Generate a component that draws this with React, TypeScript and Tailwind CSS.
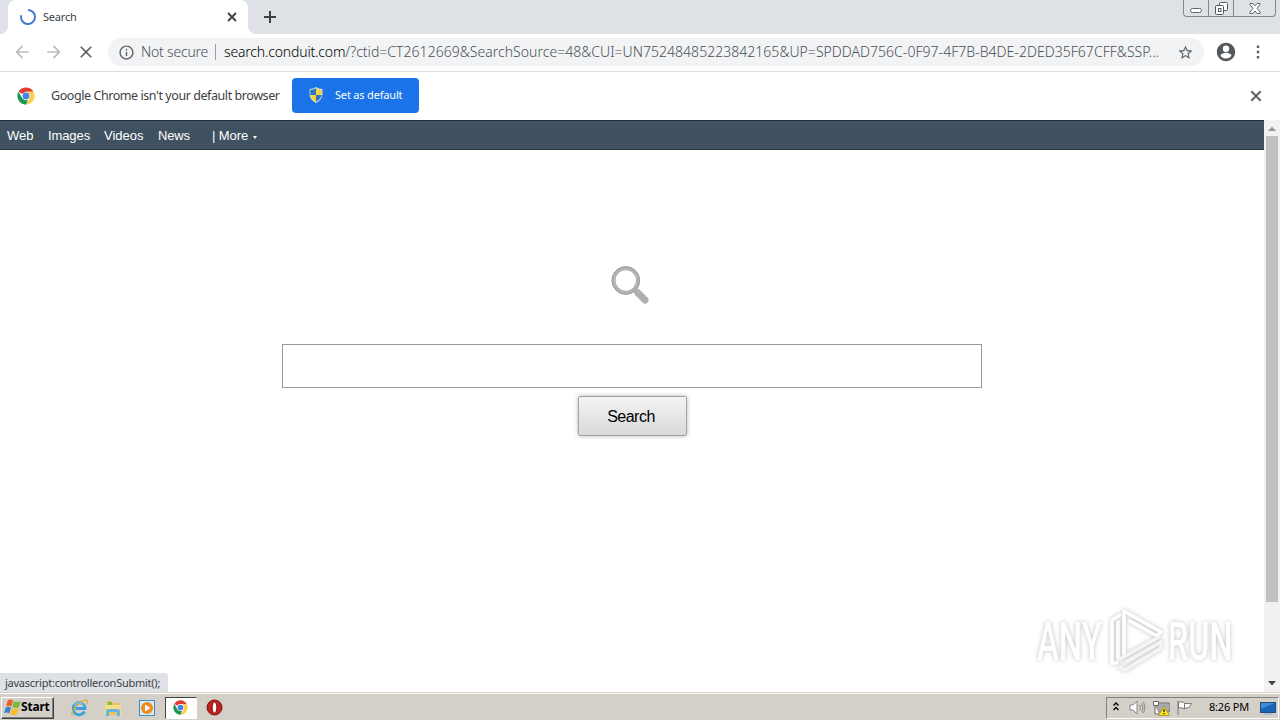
import type { ReactNode } from "react";

const Glyph = ({ size = 16, className = "", children }: { size?: number; className?: string; children: ReactNode }) => (
  <svg width={size} height={size} viewBox="0 0 24 24" fill="currentColor" className={`shrink-0 ${className}`}>
    {children}
  </svg>
);

const ChromeLogo = ({ size }: { size: number }) => (
  <svg width={size} height={size} viewBox="0 0 48 48" className="shrink-0">
    <circle cx="24" cy="24" r="23" fill="#fff" />
    <path d="M24 24 4.1 12.5A23 23 0 0 1 43.9 12.5H24Z" fill="#e33b2e" />
    <path d="M24 12.5h19.9A23 23 0 0 1 24 47l10-17Z" fill="#fcd04b" />
    <path d="M4.1 12.5 14 29.8l10 5.7 5-1L24 47A23 23 0 0 1 4.1 12.5Z" fill="#1a9850" />
    <circle cx="24" cy="24" r="11" fill="#fff" />
    <circle cx="24" cy="24" r="9.2" fill="#4a83e6" />
  </svg>
);

const TabStrip = () => {
  return (
    <div className="flex h-[34px] bg-[#dee1e6]">
      <div className="w-2 bg-white">
        <div className="h-full w-2 rounded-br-lg bg-[#dee1e6]" />
      </div>
      <div className="flex w-[240px] items-center rounded-t-lg bg-white pl-3 pr-2.5">
        <svg width="16" height="16" viewBox="0 0 16 16" className="shrink-0" fill="none" stroke="#4478d0" strokeWidth="2">
          <path d="M8 1A7 7 0 1 1 1.2 6.3" />
        </svg>
        <span className="ml-[7px] flex-1 text-[11px] tracking-[-0.2px] text-[#3c4043]">Search</span>
        <svg width="12" height="12" viewBox="0 0 12 12" stroke="#3c4043" strokeWidth="1.8">
          <path d="m2 2 8 8M10 2l-8 8" />
        </svg>
      </div>
      <div className="w-2 bg-white">
        <div className="h-full w-2 rounded-bl-lg bg-[#dee1e6]" />
      </div>
      <svg width="12" height="12" viewBox="0 0 12 12" className="ml-2 mt-[11px]" stroke="#3c4043" strokeWidth="2">
        <path d="M6 0v12M0 6h12" />
      </svg>
      <div className="ml-auto mr-1 flex h-[17px] w-[93px] rounded-b border border-t-0 border-[#85878d]">
        <div className="flex w-[25px] items-center justify-center border-r border-[#85878d]">
          <div className="mt-1 h-[5px] w-3 rounded-sm border border-[#62656b] bg-white" />
        </div>
        <div className="flex w-[25px] items-center justify-center border-r border-[#85878d]">
          <svg width="13" height="13" viewBox="0 0 13 13" fill="#fff" stroke="#56595f">
            <rect x="4.5" y=".5" width="8" height="8" rx="1" />
            <rect x=".5" y="3.5" width="8" height="9" rx="1" />
            <rect x="3.5" y="6.5" width="2.5" height="3" />
          </svg>
        </div>
        <div className="flex flex-1 items-center justify-center">
          <svg width="12" height="11" viewBox="0 0 12 11" fill="#fff" stroke="#62656b">
            <path d="M1 .5h3l2 2.3L8 .5h3v1L8 5.5l3 3.5v1.5H8L6 8l-2 2.5H1V9l3-3.5-3-4Z" />
          </svg>
        </div>
      </div>
    </div>
  );
};

const AddressBar = () => {
  return (
    <div className="flex h-[38px] items-start border-b border-[#dcdee1] bg-white pt-1">
      <Glyph size={20} className="ml-3 mt-1 text-[#bbbdc0]">
        <path d="M20 11H7.8l5.6-5.6L12 4l-8 8 8 8 1.4-1.4L7.8 13H20z" />
      </Glyph>
      <Glyph size={20} className="ml-3 mt-1 text-[#bbbdc0]">
        <path d="m12 4-1.4 1.4 5.6 5.6H4v2h12.2l-5.6 5.6L12 20l8-8z" />
      </Glyph>
      <Glyph size={20} className="ml-3 mt-1 text-[#5f6368]">
        <path d="M19 6.4 17.6 5 12 10.6 6.4 5 5 6.4l5.6 5.6L5 17.6 6.4 19l5.6-5.6 5.6 5.6 1.4-1.4-5.6-5.6z" />
      </Glyph>
      <div className="ml-3 flex h-7 w-[1096px] items-center rounded-full bg-[#f1f3f4] pl-[10px] pr-[10px] text-[14px] font-light text-[#4c5055]">
        <Glyph size={17} className="text-[#5f6368]">
          <path d="M11 7h2v2h-2zm0 4h2v6h-2zm1-9C6.500 2 2 6.500 2 12s4.500 10 10 10 10-4.500 10-10S17.500 2 12 2m0 18c-4.400 0-8-3.600-8-8s3.600-8 8-8 8 3.600 8 8-3.600 8-8 8" />
        </Glyph>
        <span className="-mt-px ml-1.5 w-[67px] whitespace-nowrap tracking-[-0.2px]">Not secure</span>
        <div className="ml-[7px] h-4 w-px bg-[#9a9da1]" />
        <span className="-mt-px ml-2 flex-1 whitespace-nowrap">
          <span className="tracking-[-0.17px] text-black">search.conduit.com</span>
          <span className="tracking-[0.03px]">
            /?ctid=CT2612669&SearchSource=48&CUI=UN75248485223842165&UP=SPDDAD756C-0F97-4F7B-B4DE-2DED35F67CFF&SSP...
          </span>
        </span>
        <Glyph size={17} className="text-[#5f6368]">
          <path d="m22 9.200-7.200-.600L12 2 9.200 8.600 2 9.200l5.500 4.800L5.800 21l6.200-3.700 6.200 3.700-1.600-7zm-10 6.200-3.800 2.300 1-4.300-3.300-2.900 4.400-.400L12 6.100l1.700 4 4.400.400-3.300 2.900 1 4.300z" />
        </Glyph>
      </div>
      <Glyph size={22} className="ml-[11px] mt-[3px] text-[#54575c]">
        <path d="M12 2C6.500 2 2 6.500 2 12s4.500 10 10 10 10-4.500 10-10S17.500 2 12 2m0 3a3.500 3.500 0 1 1 0 7 3.500 3.500 0 0 1 0-7m0 14.200c-2.500 0-4.700-1.300-6-3.200 0-2 4-3.100 6-3.100s6 1.100 6 3.100a7.200 7.200 0 0 1-6 3.200" />
      </Glyph>
      <Glyph size={20} className="ml-[11px] mt-1 text-[#5f6368]">
        <path d="M10.500 4.200h3v3h-3zm0 6.300h3v3h-3zm0 6.300h3v3h-3z" />
      </Glyph>
    </div>
  );
};

const DefaultBrowserBar = () => {
  return (
    <div className="flex h-12 items-center bg-white pb-px pl-[17px]">
      <ChromeLogo size={18} />
      <span className="ml-4 mt-px w-[229px] whitespace-nowrap text-[12.500px] tracking-[-0.43px] text-[#3c4043]">
        Google Chrome isn't your default browser
      </span>
      <button className="ml-3 flex h-[35px] w-[127px] items-center rounded bg-[#1a73e8] pl-4 text-[11px] text-white">
        <svg width="16" height="16" viewBox="0 0 16 16" className="-mt-0.5">
          <path d="M8 0q3 2 6.500 2v4.500C14.500 11 12 14 8 16 4 14 1.500 11 1.500 6.500V2Q5 2 8 0Z" fill="#c9dceb" />
          <path d="M8 1.300V8H2.300V3Q5 3 8 1.300ZM8 8h5.700c-.5 3-3 5.500-5.700 6.800Z" fill="#2f75c4" />
          <path d="M8 1.300Q11 3 13.700 3v5H8ZM2.300 8H8v6.800C4.500 13.500 2.500 11 2.300 8Z" fill="#f5d53b" />
        </svg>
        <span className="ml-[11px] whitespace-nowrap tracking-[-0.18px]">Set as default</span>
      </button>
      <svg width="12" height="12" viewBox="0 0 12 12" className="ml-auto mr-[18px] mt-px" stroke="#5f6368" strokeWidth="2">
        <path d="m1.300 1.300 9.400 9.400m0-9.400-9.400 9.400" />
      </svg>
    </div>
  );
};

const SearchPage = () => {
  return (
    <main className="flex-1 bg-white font-['Liberation_Sans',sans-serif]">
      <nav className="flex h-[30px] items-center border-y border-t-[#22303b] border-b-[#26323c] bg-[#405161] pl-[7px] pt-0.5 text-[13px] text-white">
        <span className="w-[41px]">Web</span>
        <span className="w-[56px] tracking-[-0.1px]">Images</span>
        <span className="w-[54px]">Videos</span>
        <span className="w-[54px] tracking-[-0.2px]">News</span>
        <span className="whitespace-nowrap tracking-[-0.1px]">| More</span>
        <svg width="4" height="3" viewBox="0 0 4 3" className="ml-[5px] mt-[3px]">
          <path d="M0 0h4L2 3Z" fill="#fff" />
        </svg>
      </nav>
      <div className="flex flex-col items-center pt-[115px]">
        <svg width="40" height="40" viewBox="0 0 40 40" className="mr-1" fill="none">
          <circle cx="15.800" cy="15.500" r="12.200" stroke="#b4b4b4" strokeWidth="4" />
          <circle cx="15.800" cy="15.500" r="13.700" stroke="#9c9c9c" />
          <path d="m24 24 3 3" stroke="#aaa" strokeWidth="3" />
          <path d="m27.500 27.500 7.500 7.500" stroke="#b0b0b0" strokeWidth="7" strokeLinecap="round" />
        </svg>
        <input className="mt-[39px] h-11 w-[700px] border border-[#999] bg-white px-3 outline-none" />
        <button className="mt-2 h-10 w-[109px] rounded-xs border border-[#a2a2a2] bg-linear-to-b from-[#f4f4f4] to-[#d9d9d9] pr-0.5 pt-0.5 text-[16px] tracking-[-0.5px] text-black shadow-[0_0_4px_rgba(0,0,0,0.3)]">
          Search
        </button>
      </div>
    </main>
  );
};

const Scrollbar = () => {
  return (
    <div className="flex w-4 flex-col items-center bg-[#f1f1f1]">
      <svg width="16" height="16" viewBox="0 0 16 16">
        <path d="M4 11h8L8 6.500Z" fill="#9b9b9b" />
      </svg>
      <div className="h-[466px] w-3 bg-[#c1c1c1]" />
      <svg width="16" height="16" viewBox="0 0 16 16" className="mt-auto">
        <path d="M4 5h8L8 9.500Z" fill="#454545" />
      </svg>
    </div>
  );
};

const Watermark = () => {
  return (
    <div className="absolute right-[48px] top-[486px] flex h-[68px] w-[195px] items-center justify-between font-['Roboto',sans-serif] text-[53px] font-medium leading-none text-white drop-shadow-[0_0_2px_rgba(0,0,0,0.25)]">
      <span className="mt-1 w-[66px] origin-left scale-x-[0.62]">ANY</span>
      <svg width="60" height="66" viewBox="0 0 60 66" className="shrink-0" fill="none" stroke="#fff" strokeWidth="4" strokeLinecap="round" strokeLinejoin="round">
        <path d="M18 48V4L55 25l-4 4-27-15M14 8l-8 5v43h5M12 15v37" strokeWidth="3.500" />
        <path d="m12 53 41-23M14 60l5 3 36-22v-6L20 55" stroke="#f4f4f4" strokeWidth="3.500" />
      </svg>
      <span className="mt-1 w-[64px] origin-left scale-x-[0.61]">RUN</span>
    </div>
  );
};

const Taskbar = () => {
  return (
    <footer className="flex h-7 items-center border-t border-[#d4d0c8] bg-[#d4d0c8] shadow-[inset_0_1px_0_#fff]">
      <button className="ml-px mt-0.5 flex h-[22px] w-[53px] items-center border border-b-[#404040] border-l-white border-r-[#404040] border-t-white pl-[2px] text-[12px] font-bold text-black shadow-[inset_-1px_-1px_0_#808080]">
        <svg width="17" height="17" viewBox="0 0 16 16" className="shrink-0">
          <path d="M3.500 1.500q3-2 5 0L7 7Q4.500 5.500 2 7Z" fill="#e8612c" />
          <path d="M9.300 2q3 1.500 6.500 0L14 8q-3 1-6.200-.5Z" fill="#7db83c" />
          <path d="M1.700 8q3-1.500 5 0L5 13.500q-3-1.500-5 0Z" fill="#3c83cf" />
          <path d="M7.500 8.500q3 1.500 6.200.5L12 14.500q-3 1.500-6.200-.5Z" fill="#f6bd27" />
        </svg>
        <span className="-mt-0.5 tracking-[-0.2px]">Start</span>
      </button>
      <div className="ml-4 mt-0.5 flex items-center">
        <svg width="18" height="18" viewBox="0 0 18 18" fill="none">
          <path d="M14.500 12.500A6 6 0 1 1 15 8.500v1H5.500" stroke="#3da0dc" strokeWidth="2.800" />
          <path d="M13.500 6A5.500 5.500 0 0 0 4 7" stroke="#9bdcf5" />
          <path d="M2.500 16.500C-1 12.500 13-1 17 1.500q1 1-.5 4" stroke="#e1ad2f" strokeWidth="1.200" />
        </svg>
        <svg width="18" height="18" viewBox="0 0 18 18" className="ml-4">
          <path d="M2 2h6l1 2h7v12H2Z" fill="#e6c464" />
          <path d="M4 3h4v3H4Z" fill="#78b957" />
          <path d="M1 6h15l1 2v8h-4v-4H5v4H1Z" fill="#f6dd86" />
          <path d="M2 17v-5q0-2 3-2h8q3 0 3 2v5h-3v-4H5v4Z" fill="#67b6dd" />
        </svg>
        <svg width="18" height="18" viewBox="0 0 18 18" className="ml-4">
          <rect x="1.500" y="1.500" width="15" height="15" fill="#d9ebf7" stroke="#3c8dc6" />
          <circle cx="9" cy="9" r="6" fill="#ef8b1c" />
          <path d="M7 5.500v7L12.500 9Z" fill="#fff" />
        </svg>
        <div className="ml-[9px] flex h-[22px] w-8 items-center justify-center border border-b-white border-l-[#404040] border-r-white border-t-[#404040] bg-white pb-px pr-0.5">
          <ChromeLogo size={15} />
        </div>
        <svg width="17" height="17" viewBox="0 0 17 17" className="ml-[9px]">
          <circle cx="8.500" cy="8.500" r="7.500" fill="#c42022" stroke="#741314" />
          <ellipse cx="8.500" cy="8.500" rx="2.300" ry="5.500" fill="#fff" stroke="#741314" />
        </svg>
      </div>
      <div className="ml-auto mr-px mt-0.5 flex h-[22px] w-[173px] items-center border border-b-white border-l-[#808080] border-r-white border-t-[#808080] pl-1.5 text-[11px] text-black">
        <svg width="6" height="9" viewBox="0 0 6 9" className="-mt-0.5" fill="none" stroke="#000" strokeWidth="1.300">
          <path d="m.5 3.500 2.500-2.500 2.500 2.500m-5 4.500L3 5.500 5.500 8" />
        </svg>
        <svg width="17" height="15" viewBox="0 0 17 15" className="ml-2.5" fill="none" stroke="#858585">
          <path d="M1 5h3l4-4v13l-4-4H1Z" fill="#fff" />
          <path d="M10.500 5q2 2.500 0 5M12.500 3.500q3 4 0 8M14.500 2q3 5.500 0 11" />
        </svg>
        <svg width="17" height="16" viewBox="0 0 17 16" className="ml-[7px]">
          <rect x="4.500" y="3" width="11" height="9" fill="#a5aaac" stroke="#fff" />
          <path d="M4 3h12v9H4Z" fill="none" stroke="#555" />
          <path d="M.5 1.500h5v4h-5ZM2 5.500V14h4" fill="#fff" stroke="#666" />
          <path d="M11 6 16.500 15.500h-11Z" fill="#f8df1f" stroke="#a28b14" strokeWidth=".7" />
          <path d="M11 9v3m0 1v1.200" stroke="#222" strokeWidth="1.300" />
        </svg>
        <svg width="17" height="16" viewBox="0 0 17 16" className="ml-[6px]" fill="#fff" stroke="#777">
          <path d="M2 1v14M2.500 2q4-1 6 1v6q-3-2-6-1ZM8.500 3.500h7l-2.500 4-4.500 1Z" />
        </svg>
        <span className="ml-4 w-[39px] whitespace-nowrap tracking-[-0.2px]">8:26 PM</span>
        <svg width="16" height="16" viewBox="0 0 16 16" className="ml-auto mr-0.5">
          <rect x=".5" y="2.500" width="15" height="10" fill="#1965b5" stroke="#254c78" />
          <path d="M1 3h14L1 9Z" fill="#3c8bd8" />
          <path d="M5 13h7l2 2H3Z" fill="#a9bdcc" />
        </svg>
      </div>
    </footer>
  );
};

export default function App() {
  return (
    <div className="flex h-[720px] w-[1280px] flex-col overflow-hidden bg-white font-['Noto_Sans',sans-serif]">
      <TabStrip />
      <AddressBar />
      <DefaultBrowserBar />
      <div className="relative flex flex-1">
        <SearchPage />
        <Scrollbar />
        <Watermark />
        <div className="absolute bottom-0 left-0 flex h-[19px] w-[168px] items-center rounded-tr bg-[#dee1e6] pl-[5px] pt-px text-[11px] text-[#3c4043]">
          <span className="whitespace-nowrap tracking-[-0.25px]">javascript:controller.onSubmit();</span>
        </div>
      </div>
      <Taskbar />
    </div>
  );
}
